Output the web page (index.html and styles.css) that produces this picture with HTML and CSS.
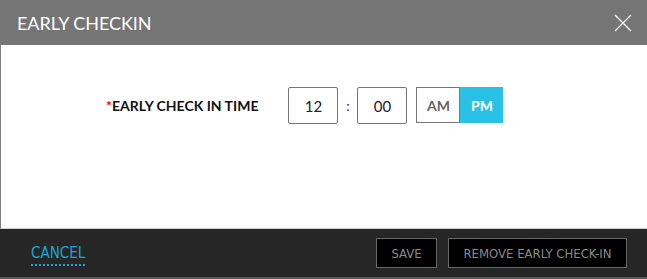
FILE: index.html
```
<!DOCTYPE html>
<html>
<head>
<meta charset="utf-8">
<link rel="stylesheet" href="styles.css">
</head>
<body>
<div class="dialog">
  <div class="header">
    <span class="title">EARLY CHECKIN</span>
    <svg class="close" width="18" height="18" viewBox="0 0 18 18"><path d="M1 1L17 17M17 1L1 17" stroke="#fff" stroke-width="1.3" fill="none"/></svg>
  </div>
  <div class="content">
    <div class="row">
      <label class="label"><span class="req">*</span>EARLY CHECK IN TIME</label>
      <div class="field">12</div>
      <span class="colon">:</span>
      <div class="field">00</div>
      <div class="ampm">
        <span class="am">AM</span>
        <span class="pm">PM</span>
      </div>
    </div>
  </div>
  <div class="footer">
    <a class="cancel">CANCEL</a>
    <div class="actions">
      <button class="btn save">SAVE</button>
      <button class="btn remove">REMOVE EARLY CHECK-IN</button>
    </div>
  </div>
</div>
</body>
</html>
```
FILE: styles.css
```
html, body { margin: 0; padding: 0; }
body { width: 647px; height: 279px; overflow: hidden; background: #fff; }
.dialog { width: 647px; height: 279px; display: flex; flex-direction: column; }
.header {
  height: 45px; background: #757575; display: flex; align-items: center;
  justify-content: space-between; padding: 0 17px 0 17px; box-sizing: border-box;
}
.title { font-family: Lato, sans-serif; font-size: 18px; color: #fff; letter-spacing: -0.05px; }
.close { margin-top: 1px; margin-right: -2px; }
.content { flex: 1; border-left: 1px solid #808080; border-bottom: 1px solid #d0d0d0; }
.row { display: flex; align-items: center; margin-top: 42px; padding-left: 105px; height: 37px; }
.label { font-family: Lato, sans-serif; font-weight: bold; font-size: 14px; color: #111; margin-right: 30px; }
.req { color: #e2001a; }
.field {
  width: 50px; height: 37px; box-sizing: border-box; border: 1px solid #777; border-radius: 2px;
  display: flex; align-items: center; justify-content: center;
  font-family: Lato, sans-serif; font-size: 15px; color: #222;
}
.colon { width: 19px; text-align: center; font-family: Lato, sans-serif; font-size: 14px; color: #333; }
.ampm { display: flex; margin-left: 9px; height: 36px; align-self: flex-start; }
.ampm span {
  width: 44px; box-sizing: border-box; display: flex; align-items: center; justify-content: center;
  font-family: Lato, sans-serif; font-weight: bold; font-size: 14px;
}
.am { border: 1px solid #777; color: #666; }
.pm { background: #29c2e6; color: #fff; width: 43px !important; }
.footer {
  height: 50px; background: #262626; border-bottom: 2px solid #5a5a5a; box-sizing: border-box;
  display: flex; align-items: center; justify-content: space-between; padding: 0 20px 0 31px;
}
.cancel {
  font-family: "Liberation Sans Narrow", "DejaVu Sans Condensed", sans-serif; font-size: 15px;
  color: #1ea3d6; border-bottom: 2px dotted #1ea3d6; padding-bottom: 2px; margin-top: 4px;
}
.actions { display: flex; gap: 11px; }
.btn {
  height: 30px; background: #000; border: 1px solid #666; color: #8a8a8a;
  font-family: "Liberation Sans Narrow", "DejaVu Sans Condensed", sans-serif; font-size: 13px;
  padding: 0; margin: 0;
}
.save { width: 61px; }
.remove { width: 179px; }
```
